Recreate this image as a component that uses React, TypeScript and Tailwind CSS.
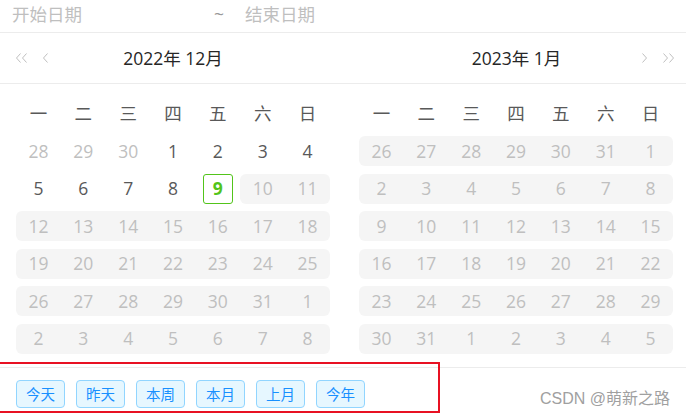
import React from "react";

type Day = { n: number; kind: "muted" | "normal" | "disabled" | "today" };

const FONT = { fontFamily: '"Open Sans", "Noto Sans CJK SC", sans-serif' };
const WEEK = ["一", "二", "三", "四", "五", "六", "日"];

const mk = (nums: number[], kind: Day["kind"]): Day[] => nums.map((n) => ({ n, kind }));
const range = (a: number, b: number) => Array.from({ length: b - a + 1 }, (_, i) => a + i);

const decRows: Day[][] = [
  [...mk([28, 29, 30], "muted"), ...mk([1, 2, 3, 4], "normal")],
  [...mk([5, 6, 7, 8], "normal"), { n: 9, kind: "today" }, ...mk([10, 11], "disabled")],
  mk(range(12, 18), "disabled"),
  mk(range(19, 25), "disabled"),
  mk([...range(26, 31), 1], "disabled"),
  mk(range(2, 8), "disabled"),
];

const janRows: Day[][] = [
  mk([26, 27, 28, 29, 30, 31, 1], "disabled"),
  mk(range(2, 8), "disabled"),
  mk(range(9, 15), "disabled"),
  mk(range(16, 22), "disabled"),
  mk(range(23, 29), "disabled"),
  mk([30, 31, 1, 2, 3, 4, 5], "disabled"),
];

const Chevron = ({ dir, double }: { dir: "l" | "r"; double?: boolean }) => {
  const w = double ? 11 : 5;
  const d =
    dir === "l"
      ? double
        ? "M4.5 0.5 L0.5 5 L4.5 9.5 M10.5 0.5 L6.5 5 L10.5 9.5"
        : "M4.5 0.5 L0.5 5 L4.5 9.5"
      : double
      ? "M0.5 0.5 L4.5 5 L0.5 9.5 M6.5 0.5 L10.5 5 L6.5 9.5"
      : "M0.5 0.5 L4.5 5 L0.5 9.5";
  return (
    <svg width={w} height={10} viewBox={`0 0 ${w} 10`} fill="none">
      <path d={d} stroke="#bfbfbf" strokeWidth="1" />
    </svg>
  );
};

const Row = ({ days }: { days: Day[] }) => (
  <div className="grid grid-cols-7 h-[30px]">
    {days.map((d, i) => {
      const dis = d.kind === "disabled";
      const prevDis = i > 0 && days[i - 1].kind === "disabled";
      const nextDis = i < days.length - 1 && days[i + 1].kind === "disabled";
      return (
        <div
          key={i}
          className={
            "flex items-center justify-center h-[30px] " +
            (dis ? "bg-[#f5f5f5] text-[#bfbfbf] " : "") +
            (dis && !prevDis ? "rounded-l-[6px] " : "") +
            (dis && !nextDis ? "rounded-r-[6px] " : "") +
            (d.kind === "muted" ? "text-[#bfbfbf] " : "") +
            (d.kind === "normal" ? "text-[#595959] " : "")
          }
        >
          {d.kind === "today" ? (
            <span className="w-[30px] h-[30px] flex items-center justify-center border border-[#52c41a] rounded-[3px] font-bold text-[#52c41a]">
              {d.n}
            </span>
          ) : (
            d.n
          )}
        </div>
      );
    })}
  </div>
);

const Panel = ({ rows }: { rows: Day[][] }) => (
  <div className="w-1/2 pl-4 pr-[13px]">
    <div className="grid grid-cols-7 h-[30px] mt-[14px] mb-[8px] text-[#595959]">
      {WEEK.map((w) => (
        <div key={w} className="flex items-center justify-center">
          {w}
        </div>
      ))}
    </div>
    <div className="flex flex-col gap-[7.5px]">
      {rows.map((r, i) => (
        <Row key={i} days={r} />
      ))}
    </div>
  </div>
);

const shortcuts = ["今天", "昨天", "本周", "本月", "上月", "今年"];

export default function App() {
  return (
    <div className="relative w-[686px] h-[416px] bg-white overflow-hidden text-[17.5px]" style={FONT}>
      {/* range inputs */}
      <div className="flex h-[33px] border-b border-[#ececec] pl-3 pt-[2px] leading-[25px] text-[#bfbfbf]">
        <div className="w-[195px]">开始日期</div>
        <div className="w-[24px] text-center text-[#999]">~</div>
        <div className="pl-[14px]">结束日期</div>
      </div>

      {/* month headers */}
      <div className="flex h-[51px] border-b border-[#ececec] text-[#262626]">
        <div className="w-1/2 flex items-center pl-4 pr-[13px]">
          <div className="w-[33px] flex items-center gap-4">
            <Chevron dir="l" double />
            <Chevron dir="l" />
          </div>
          <div className="flex-1 text-center">2022年 12月</div>
          <div className="w-[33px]" />
        </div>
        <div className="w-1/2 flex items-center pl-4 pr-3">
          <div className="w-[33px]" />
          <div className="flex-1 text-center">2023年 1月</div>
          <div className="w-[33px] flex items-center justify-end gap-4">
            <Chevron dir="r" />
            <Chevron dir="r" double />
          </div>
        </div>
      </div>

      {/* calendars */}
      <div className="flex pb-[13px] border-b border-[#ececec]">
        <Panel rows={decRows} />
        <Panel rows={janRows} />
      </div>

      {/* footer */}
      <div className="flex items-start justify-between pt-[12px] pl-4 pr-4">
        <div className="flex gap-[11px]">
          {shortcuts.map((s) => (
            <button
              key={s}
              className="w-[49px] h-[28px] flex items-center justify-center rounded-[4px] border border-[#91d5ff] bg-[#e6f7ff] text-[#1890ff] text-[14.5px]"
              style={{ fontFamily: '"Noto Sans CJK SC", sans-serif' }}
            >
              {s}
            </button>
          ))}
        </div>
        <div
          className="mt-[7px] text-[16px] text-[#a0a0a0]"
          style={{ fontFamily: '"Liberation Sans", "Noto Sans CJK SC", sans-serif' }}
        >
          CSDN @萌新之路
        </div>
      </div>

      {/* red annotation box */}
      <div className="absolute left-0 top-[362px] w-[440px] h-[51px] border-2 border-l-0 border-[#e81123] pointer-events-none" />
    </div>
  );
}
